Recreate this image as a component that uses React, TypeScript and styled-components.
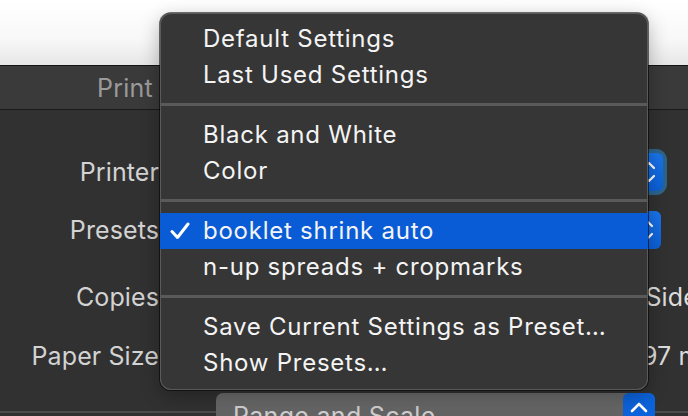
import React from 'react';
import styled, { createGlobalStyle } from 'styled-components';

const Global = createGlobalStyle`
  html, body { margin: 0; padding: 0; }
  body {
    width: 688px;
    height: 416px;
    overflow: hidden;
    background: #ffffff;
    font-family: Inter, "Noto Sans", "Liberation Sans", sans-serif;
  }
`;

const Screen = styled.div`
  position: relative;
  width: 688px;
  height: 416px;
  overflow: hidden;
  display: flex;
  flex-direction: column;
`;

const Desktop = styled.div`
  flex: none;
  height: 65px;
  background: linear-gradient(180deg, #ffffff 0%, #f8f8f8 60%, #e6e6e6 100%);
`;

const Window = styled.div`
  flex: 1;
  min-height: 0;
  display: flex;
  flex-direction: column;
  background: #313131;
  border-top: 1px solid #141414;
`;

const TitleBar = styled.div`
  flex: none;
  height: 43px;
  display: flex;
  align-items: center;
  padding-left: 97px;
  background: #3a3a3a;
  border-bottom: 1px solid #1a1a1a;
  color: #9a9a9a;
  font-size: 25px;
  letter-spacing: 0.2px;
`;

const Body = styled.div`
  flex: 1;
  display: flex;
  flex-direction: column;
  padding-top: 42px;
`;

const Row = styled.div<{ $gap: number }>`
  display: grid;
  grid-template-columns: 159px 1fr;
  column-gap: 11px;
  align-items: center;
  height: 40px;
  margin-top: ${p => p.$gap}px;
`;

const Label = styled.div`
  text-align: right;
  color: #d3d3d3;
  font-size: 25px;
  letter-spacing: 0.1px;
  white-space: nowrap;
`;

const PopupWrap = styled.div<{ $focus?: boolean; $width: number }>`
  width: ${p => p.$width}px;
  height: 38px;
  border-radius: 7px;
  box-shadow: ${p => (p.$focus ? '0 0 0 4px rgba(44, 118, 170, 0.75)' : 'none')};
  display: flex;
  background: linear-gradient(180deg, #676767, #5a5a5a);
`;

const PopupFace = styled.div`
  flex: 1;
`;

const Stepper = styled.div`
  flex: none;
  width: 28px;
  border-radius: 6px;
  background: linear-gradient(180deg, #1a74ec, #0b5fd6);
  display: flex;
  align-items: center;
  justify-content: center;
`;

const Controls = styled.div`
  display: flex;
  align-items: center;
  white-space: nowrap;
`;

const NumberBox = styled.div`
  width: 60px;
  height: 30px;
  border-radius: 4px;
  background: #5a5a5a;
`;

const Check = styled.div`
  display: flex;
  align-items: center;
  gap: 8px;
  margin-left: 326px;
  color: #dcdcdc;
  font-size: 25px;
  letter-spacing: 0.1px;
`;

const Box = styled.div`
  width: 20px;
  height: 20px;
  border-radius: 4px;
  background: #5a5a5a;
`;

const Value = styled.div`
  margin-left: 331px;
  color: #dcdcdc;
  font-size: 25px;
  letter-spacing: 0.1px;
  white-space: nowrap;
`;

const DividerRow = styled.div`
  display: flex;
  align-items: center;
  margin-top: 17px;
  height: 38px;
`;

const Rule = styled.div<{ $fixed?: number }>`
  height: 2px;
  background: #4b4b4b;
  flex: ${p => (p.$fixed ? `0 0 ${p.$fixed}px` : '1')};
`;

const SectionPopup = styled.div`
  flex: none;
  width: 439px;
  height: 38px;
  display: flex;
  border-radius: 7px;
  background: linear-gradient(180deg, #6b6b6b, #5d5d5d);
`;

const SectionText = styled.div`
  flex: 1;
  padding-left: 17px;
  padding-top: 8px;
  color: #cfcfcf;
  font-size: 25px;
  letter-spacing: 0.3px;
  white-space: nowrap;
`;

const SectionButton = styled.div`
  flex: none;
  width: 32px;
  border-radius: 6px;
  background: #0c63db;
  display: flex;
  justify-content: center;
  padding-top: 8px;
`;

const Menu = styled.div`
  position: absolute;
  left: 160px;
  top: 13px;
  width: 488px;
  box-sizing: border-box;
  padding: 8px 0 10px;
  border-radius: 11px;
  background: #363636;
  box-shadow: inset 0 0 0 1px #5a5a5a, 0 0 0 1px rgba(0, 0, 0, 0.55),
    0 6px 20px rgba(0, 0, 0, 0.3);
  overflow: hidden;
`;

const Item = styled.div<{ $active?: boolean }>`
  height: 35.5px;
  display: grid;
  grid-template-columns: 43px 1fr;
  align-items: center;
  color: #f4f4f4;
  font-size: 24px;
  letter-spacing: 0.75px;
  white-space: nowrap;
  background: ${p => (p.$active ? '#0a5cd6' : 'transparent')};
`;

const Gutter = styled.div`
  display: flex;
  align-items: center;
  padding-left: 10px;
`;

const Separator = styled.div`
  height: 25px;
  display: flex;
  align-items: center;
  &::after {
    content: '';
    flex: 1;
    height: 3px;
    background: #5a5a5a;
  }
`;

const Chevrons = () => (
  <svg width="16" height="26" viewBox="0 0 16 26" fill="none" stroke="#fff" strokeWidth="2.2" strokeLinecap="round" strokeLinejoin="round">
    <polyline points="3,9 8,4 13,9" />
    <polyline points="3,17 8,22 13,17" />
  </svg>
);

const CheckMark = () => (
  <svg width="20" height="18" viewBox="0 0 20 18" fill="none" stroke="#fff" strokeWidth="3" strokeLinecap="round" strokeLinejoin="round">
    <polyline points="2,9.5 7.5,15.5 18,2" />
  </svg>
);

const ChevronUp = () => (
  <svg width="18" height="12" viewBox="0 0 18 12" fill="none" stroke="#fff" strokeWidth="2.6" strokeLinecap="round" strokeLinejoin="round">
    <polyline points="2,10 9,3 16,10" />
  </svg>
);

type Entry = { label: string; active?: boolean } | 'sep';

const entries: Entry[] = [
  { label: 'Default Settings' },
  { label: 'Last Used Settings' },
  'sep',
  { label: 'Black and White' },
  { label: 'Color' },
  'sep',
  { label: 'booklet shrink auto', active: true },
  { label: 'n-up spreads + cropmarks' },
  'sep',
  { label: 'Save Current Settings as Preset…' },
  { label: 'Show Presets…' },
];

export default function App() {
  return (
    <Screen>
      <Global />
      <Desktop />
      <Window>
        <TitleBar>Print</TitleBar>
        <Body>
          <Row $gap={0}>
            <Label>Printer</Label>
            <PopupWrap $focus $width={493}>
              <PopupFace />
              <Stepper>
                <Chevrons />
              </Stepper>
            </PopupWrap>
          </Row>
          <Row $gap={18}>
            <Label>Presets</Label>
            <PopupWrap $width={491}>
              <PopupFace />
              <Stepper>
                <Chevrons />
              </Stepper>
            </PopupWrap>
          </Row>
          <Row $gap={27}>
            <Label>Copies</Label>
            <Controls>
              <NumberBox />
              <Check>
                <Box />
                Two-Sided
              </Check>
            </Controls>
          </Row>
          <Row $gap={19}>
            <Label>Paper Size</Label>
            <Value>A4 210 by 297 mm</Value>
          </Row>
          <DividerRow>
            <Rule $fixed={216} />
            <SectionPopup>
              <SectionText>Range and Scale</SectionText>
              <SectionButton>
                <ChevronUp />
              </SectionButton>
            </SectionPopup>
            <Rule />
          </DividerRow>
        </Body>
      </Window>
      <Menu>
        {entries.map((e, i) =>
          e === 'sep' ? (
            <Separator key={i} />
          ) : (
            <Item key={i} $active={e.active}>
              <Gutter>{e.active ? <CheckMark /> : null}</Gutter>
              <span>{e.label}</span>
            </Item>
          )
        )}
      </Menu>
    </Screen>
  );
}
